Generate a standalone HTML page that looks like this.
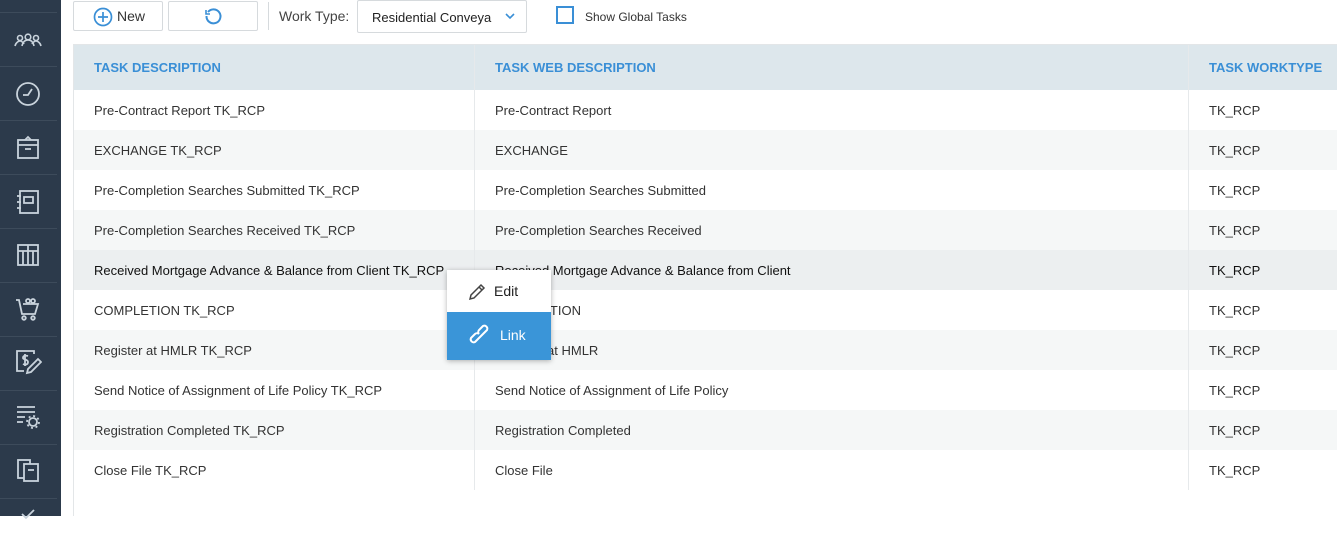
<!DOCTYPE html>
<html><head><style>
*{margin:0;padding:0;box-sizing:border-box}
body{width:1337px;height:516px;overflow:hidden;background:#fff;font-family:"Liberation Sans",Arial,sans-serif;position:relative}
.sb{position:absolute;left:0;top:0;width:61px;height:516px;background:#2c3a4b}
.sep{position:absolute;left:0;width:57px;height:1px;background:#3d4b5b}
.ic{position:absolute;left:14px;width:28px;height:28px}
.btn{position:absolute;top:1px;height:30px;border:1px solid #d6dadd;background:#fff;border-radius:2px}
.tbl{position:absolute;left:73px;top:44px;width:1264px;height:472px;border-left:1px solid #e3e6e8;border-top:1px solid #e3e6e8}
.row{position:absolute;left:0;width:1264px;height:40px;font-size:13px;color:#333}
.row span{position:absolute;top:13px}
.c1{left:20px}.c2{left:421px}.c3{left:1135px}
.vl{position:absolute;top:0;width:1px;height:445px;background:#e6e9eb}
.hd{background:#dde7ec;height:45px;top:0}
.hd span{color:#3a8fd6;font-weight:bold;font-size:13px;top:15px}
</style></head><body>
<div class="sb">
<div class="sep" style="top:12px"></div><div class="sep" style="top:66px"></div><div class="sep" style="top:120px"></div><div class="sep" style="top:174px"></div><div class="sep" style="top:228px"></div><div class="sep" style="top:282px"></div><div class="sep" style="top:336px"></div><div class="sep" style="top:390px"></div><div class="sep" style="top:444px"></div><div class="sep" style="top:498px"></div>
<svg class="ic" style="top:27px" viewBox="0 0 28 28" fill="none" stroke="#c9d3dc" stroke-width="1.6"><circle cx="6" cy="11" r="2.5"/><circle cx="14" cy="10" r="2.8"/><circle cx="22" cy="11" r="2.5"/><path d="M1 19c1-4 4-5 5-5s3 1 4 3M8 19c1-5 4-6 6-6s5 1 6 6M18 17c1-2 3-3 4-3s4 1 5 5"/></svg>
<svg class="ic" style="top:80px" viewBox="0 0 28 28" fill="none" stroke="#c9d3dc" stroke-width="1.8"><circle cx="14" cy="14" r="11"/><path d="M9 15l5 0 4-6"/></svg>
<svg class="ic" style="top:134px" viewBox="0 0 28 28" fill="none" stroke="#c9d3dc" stroke-width="1.8"><rect x="4" y="6" width="20" height="18"/><path d="M4 11h20M11 15h6M11 6l3-3 3 3"/></svg>
<svg class="ic" style="top:188px" viewBox="0 0 28 28" fill="none" stroke="#c9d3dc" stroke-width="1.8"><rect x="6" y="3" width="18" height="22"/><rect x="10" y="9" width="9" height="6"/><path d="M3 8h4M3 14h4M3 20h4"/></svg>
<svg class="ic" style="top:241px" viewBox="0 0 28 28" fill="none" stroke="#c9d3dc" stroke-width="1.8"><rect x="4" y="4" width="20" height="20"/><path d="M14 4v20M4 10h20M9 10v14M19 10v14"/></svg>
<svg class="ic" style="top:295px" viewBox="0 0 28 28" fill="none" stroke="#c9d3dc" stroke-width="1.8"><path d="M2 5h3l3 14h13l3-10H9"/><circle cx="10" cy="23" r="1.8"/><circle cx="19" cy="23" r="1.8"/><circle cx="14" cy="6" r="2"/><circle cx="19" cy="6" r="2"/></svg>
<svg class="ic" style="top:349px" viewBox="0 0 28 28" fill="none" stroke="#c9d3dc" stroke-width="1.8"><path d="M20 5V2H3v20h7"/><path d="M14 7c-3-1-5 0-5 2s5 1 5 4-3 3-5 2M11 5v12"/><path d="M24 10l3 3-10 10-4 1 1-4z"/></svg>
<svg class="ic" style="top:403px" viewBox="0 0 28 28" fill="none" stroke="#c9d3dc" stroke-width="1.8"><path d="M3 4h18M3 9h18M3 14h8M3 19h6"/><circle cx="19" cy="19" r="4"/><circle cx="19" cy="19" r="6" stroke-dasharray="2 2.7"/></svg>
<svg class="ic" style="top:456px" viewBox="0 0 28 28" fill="none" stroke="#c9d3dc" stroke-width="1.8"><rect x="4" y="4" width="12" height="18"/><rect x="10" y="8" width="14" height="17" fill="#2c3a4b"/><path d="M14 14h6"/></svg>
<svg class="ic" style="top:506px" viewBox="0 0 28 28" fill="none" stroke="#c9d3dc" stroke-width="1.8"><path d="M8 8l4 4 8-8"/></svg>
</div>
<div class="btn" style="left:73px;width:90px"><svg style="position:absolute;left:19px;top:5px" width="20" height="20" viewBox="0 0 20 20" fill="none" stroke="#3a8fd6" stroke-width="1.7"><circle cx="10" cy="10" r="8.5"/><path d="M10 5v10M5 10h10"/></svg><span style="position:absolute;left:43px;top:6px;font-size:14px;color:#333">New</span></div>
<div class="btn" style="left:168px;width:90px"><svg style="position:absolute;left:34px;top:5px" width="20" height="20" viewBox="0 0 20 20" fill="none" stroke="#3a8fd6" stroke-width="2"><path d="M5 5a7 7 0 1 1-1.5 4"/><path d="M3 3v4h4" stroke-width="1.6"/></svg></div>
<div style="position:absolute;left:268px;top:2px;width:1px;height:28px;background:#d6dadd"></div>
<span style="position:absolute;left:279px;top:8px;font-size:14px;color:#444">Work Type:</span>
<div class="btn" style="left:357px;top:0;width:170px;height:33px"><span style="position:absolute;left:14px;top:9px;font-size:13px;color:#222">Residential Conveya</span><svg style="position:absolute;left:146px;top:11px" width="12" height="8" viewBox="0 0 12 8" fill="none" stroke="#3a8fd6" stroke-width="1.6"><path d="M2 2l4 4 4-4"/></svg></div>
<div style="position:absolute;left:556px;top:6px;width:18px;height:18px;border:2px solid #3a8fd6"></div>
<span style="position:absolute;left:585px;top:10px;font-size:12px;color:#333">Show Global Tasks</span>
<div class="tbl">
<div class="row hd"><span class="c1">TASK DESCRIPTION</span><span class="c2">TASK WEB DESCRIPTION</span><span class="c3">TASK WORKTYPE</span></div>
<div class="row" style="top:45px"><span class="c1">Pre-Contract Report TK_RCP</span><span class="c2">Pre-Contract Report</span><span class="c3">TK_RCP</span></div>
<div class="row" style="top:85px;background:#f5f7f7"><span class="c1">EXCHANGE TK_RCP</span><span class="c2">EXCHANGE</span><span class="c3">TK_RCP</span></div>
<div class="row" style="top:125px"><span class="c1">Pre-Completion Searches Submitted TK_RCP</span><span class="c2">Pre-Completion Searches Submitted</span><span class="c3">TK_RCP</span></div>
<div class="row" style="top:165px;background:#f5f7f7"><span class="c1">Pre-Completion Searches Received TK_RCP</span><span class="c2">Pre-Completion Searches Received</span><span class="c3">TK_RCP</span></div>
<div class="row" style="top:205px;background:#eceff0;color:#111"><span class="c1">Received Mortgage Advance &amp; Balance from Client TK_RCP</span><span class="c2">Received Mortgage Advance &amp; Balance from Client</span><span class="c3">TK_RCP</span></div>
<div class="row" style="top:245px"><span class="c1">COMPLETION TK_RCP</span><span class="c2">COMPLETION</span><span class="c3">TK_RCP</span></div>
<div class="row" style="top:285px;background:#f5f7f7"><span class="c1">Register at HMLR TK_RCP</span><span class="c2">Register at HMLR</span><span class="c3">TK_RCP</span></div>
<div class="row" style="top:325px"><span class="c1">Send Notice of Assignment of Life Policy TK_RCP</span><span class="c2">Send Notice of Assignment of Life Policy</span><span class="c3">TK_RCP</span></div>
<div class="row" style="top:365px;background:#f5f7f7"><span class="c1">Registration Completed TK_RCP</span><span class="c2">Registration Completed</span><span class="c3">TK_RCP</span></div>
<div class="row" style="top:405px"><span class="c1">Close File TK_RCP</span><span class="c2">Close File</span><span class="c3">TK_RCP</span></div>
<div class="vl" style="left:400px"></div><div class="vl" style="left:1114px"></div>
</div>
<div style="position:absolute;left:447px;top:270px;width:104px;height:90px;background:#fff;box-shadow:0 1px 5px rgba(0,0,0,.3)">
<svg style="position:absolute;left:20px;top:12px" width="20" height="20" viewBox="0 0 20 20" fill="none" stroke="#444" stroke-width="1.5"><path d="M3 17l1-4L14 3l3 3L7 16z M12 5l3 3"/></svg>
<span style="position:absolute;left:47px;top:13px;font-size:14px;color:#222">Edit</span>
<div style="position:absolute;left:0;top:42px;width:104px;height:48px;background:#3a95d8"><svg style="position:absolute;left:21px;top:11px" width="26" height="26" viewBox="0 0 26 26" fill="none" stroke="#fff" stroke-width="2"><path d="M11 15l-4 4a3 3 0 0 1-4-4l4-4a3 3 0 0 1 4 0M15 11l4-4a3 3 0 0 0-4-4l-4 4a3 3 0 0 0 0 4M10 16l6-6"/></svg><span style="position:absolute;left:53px;top:15px;font-size:14px;color:#fff">Link</span></div>
</div>
</body></html>
